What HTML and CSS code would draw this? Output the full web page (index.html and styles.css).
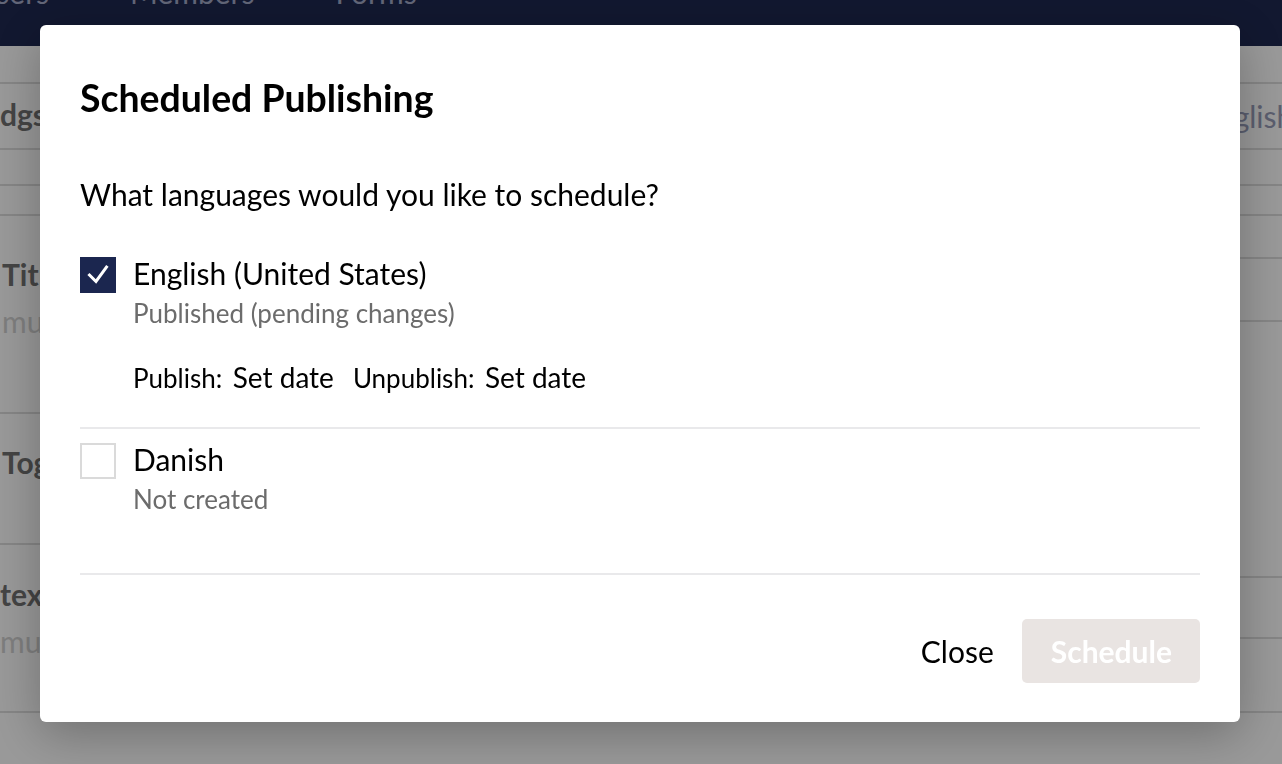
FILE: index.html
```html
<!DOCTYPE html>
<html lang="en">
<head>
<meta charset="utf-8">
<title>Scheduled Publishing</title>
<link rel="stylesheet" href="styles.css">
</head>
<body>
<div class="app">
  <header class="topbar">
    <nav class="sections">
      <span class="section section--first">Users</span>
      <span class="section">Members</span>
      <span class="section">Forms</span>
    </nav>
  </header>
  <main class="editor">
    <div class="col-labels">
      <div class="blk h38"></div>
      <div class="blk h66 pt-b"><span class="prop-label">dgs</span></div>
      <div class="blk h36"></div>
      <div class="blk h30"></div>
      <div class="blk h198 pt-e"><div class="prop-label">Title</div><div class="prop-desc">must</div></div>
      <div class="blk h131 pt-f"><div class="prop-label">Toggle</div></div>
      <div class="blk h168 pt-g"><div class="prop-label">text</div><div class="prop-desc">must</div></div>
    </div>
    <div class="col-editors">
      <div class="blk h38"></div>
      <div class="blk h66 pt-lang"><span class="lang">English (United States)</span></div>
      <div class="blk h36"></div>
      <div class="blk h30"></div>
      <div class="blk h43"></div>
      <div class="blk h63"></div>
      <div class="blk h256"></div>
      <div class="blk h61"></div>
      <div class="blk h74"></div>
    </div>
  </main>
</div>

<div class="backdrop"></div>

<div class="modal" role="dialog" aria-labelledby="modal-title">
  <div class="modal-header">
    <h1 class="modal-title" id="modal-title">Scheduled Publishing</h1>
  </div>
  <div class="modal-body">
    <p class="question">What languages would you like to schedule?</p>
    <ul class="variants">
      <li class="variant variant--divided">
        <span class="checkbox checkbox--checked">
          <svg viewBox="0 0 36 36" width="36" height="36" aria-hidden="true"><polyline points="9.5,18 16,24.5 26.5,10" fill="none" stroke="#ffffff" stroke-width="3" stroke-linecap="square" stroke-linejoin="miter"/></svg>
        </span>
        <div class="variant-info">
          <div class="variant-name">English (United States)</div>
          <div class="variant-state">Published (pending changes)</div>
          <div class="variant-dates">
            <span class="date-label">Publish:</span><span class="date-value">Set date</span>
            <span class="date-label">Unpublish:</span><span class="date-value">Set date</span>
          </div>
        </div>
      </li>
      <li class="variant variant--second">
        <span class="checkbox"></span>
        <div class="variant-info">
          <div class="variant-name">Danish</div>
          <div class="variant-state">Not created</div>
        </div>
      </li>
    </ul>
  </div>
  <div class="modal-footer">
    <button class="btn btn-link" type="button">Close</button>
    <button class="btn btn-primary" type="button" disabled>Schedule</button>
  </div>
</div>
</body>
</html>
```

FILE: styles.css
```css
* { box-sizing: border-box; }

html, body {
  margin: 0;
  padding: 0;
  width: 1282px;
  height: 764px;
  overflow: hidden;
  background: #ffffff;
  font-family: Lato, "Open Sans", "Liberation Sans", sans-serif;
  color: #000;
}

/* ---------- background page ---------- */
.topbar {
  height: 46px;
  background: #1e2850;
  overflow: hidden;
}

.sections {
  display: flex;
  margin-top: -23px;
  margin-left: -25px;
}

.section {
  font-size: 30px;
  line-height: 30px;
  color: #a4aac8;
  margin-right: 81px;
  white-space: nowrap;
}

.editor {
  display: grid;
  grid-template-columns: 1200px 1fr;
  white-space: nowrap;
}

.blk {
  border-bottom: 2px solid #dedede;
}

.h30 { height: 30px; }
.h36 { height: 36px; }
.h38 { height: 38px; }
.h43 { height: 43px; }
.h61 { height: 61px; }
.h63 { height: 63px; }
.h66 { height: 66px; }
.h74 { height: 74px; }
.h131 { height: 131px; }
.h168 { height: 168px; }
.h198 { height: 198px; }
.h256 { height: 256px; }

.pt-b { padding-top: 15px; }
.pt-e { padding-top: 43px; padding-left: 2px; }
.pt-f { padding-top: 32.5px; padding-left: 2px; }
.pt-g { padding-top: 33.5px; }
.pt-lang { padding-top: 16.5px; }

.prop-label {
  font-size: 30px;
  line-height: 30px;
  font-weight: 700;
  color: #727272;
}

.prop-desc {
  font-size: 30px;
  line-height: 30px;
  color: #d2d2d2;
  margin-top: 17px;
}

.lang {
  font-size: 30px;
  line-height: 30px;
  color: #989db8;
}

.backdrop {
  position: fixed;
  inset: 0;
  background: rgba(0, 0, 0, 0.4);
}

/* ---------- modal ---------- */
.modal {
  position: fixed;
  left: 40px;
  top: 25px;
  width: 1200px;
  background: #ffffff;
  border-radius: 6px;
  box-shadow: 0 12px 50px rgba(0, 0, 0, 0.28);
  padding: 51px 40px 39px;
}

.modal-title {
  margin: 0;
  font-size: 37.4px;
  line-height: 44px;
  font-weight: 700;
  color: #000;
}

.question {
  margin: 55.5px 0 0;
  font-size: 30px;
  line-height: 36px;
}

.variants {
  list-style: none;
  margin: 43px 0 0;
  padding: 0 0 57px;
}

.variant {
  display: flex;
  align-items: flex-start;
  gap: 17px;
}

.variant--divided {
  padding-bottom: 31.5px;
  border-bottom: 2px solid #e9e9eb;
}

.variant--second {
  padding-top: 12.5px;
}

.checkbox {
  flex: 0 0 36px;
  width: 36px;
  height: 36px;
  margin-top: 2px;
  border: 2px solid #dadada;
  background: #fff;
}

.checkbox--checked {
  border: 0;
  background: #1b264f;
}

.checkbox svg { display: block; }

.variant-name {
  font-size: 30px;
  line-height: 36px;
}

.variant-state {
  margin-top: 5.5px;
  font-size: 26px;
  line-height: 34px;
  color: #6c6c6c;
}

.variant--second .variant-state { margin-top: 5px; }

.variant-dates {
  margin-top: 30px;
  font-size: 26px;
  line-height: 34px;
  display: flex;
  align-items: baseline;
}

.date-label { margin-right: 10.5px; }
.date-value { margin-right: 19px; font-size: 28px; }

.modal-footer {
  border-top: 2px solid #e9e9eb;
  padding-top: 44px;
  display: flex;
  justify-content: flex-end;
}

.btn {
  font-family: inherit;
  height: 64px;
  border: 0;
  margin: 0;
  font-size: 30px;
  background: transparent;
}

.btn-link {
  padding: 0 28px;
  color: #000;
}

.btn-primary {
  padding: 0 28px 0 29px;
  font-weight: 700;
  color: #ffffff;
  background: #e9e4e2;
  border-radius: 5px;
}
```
